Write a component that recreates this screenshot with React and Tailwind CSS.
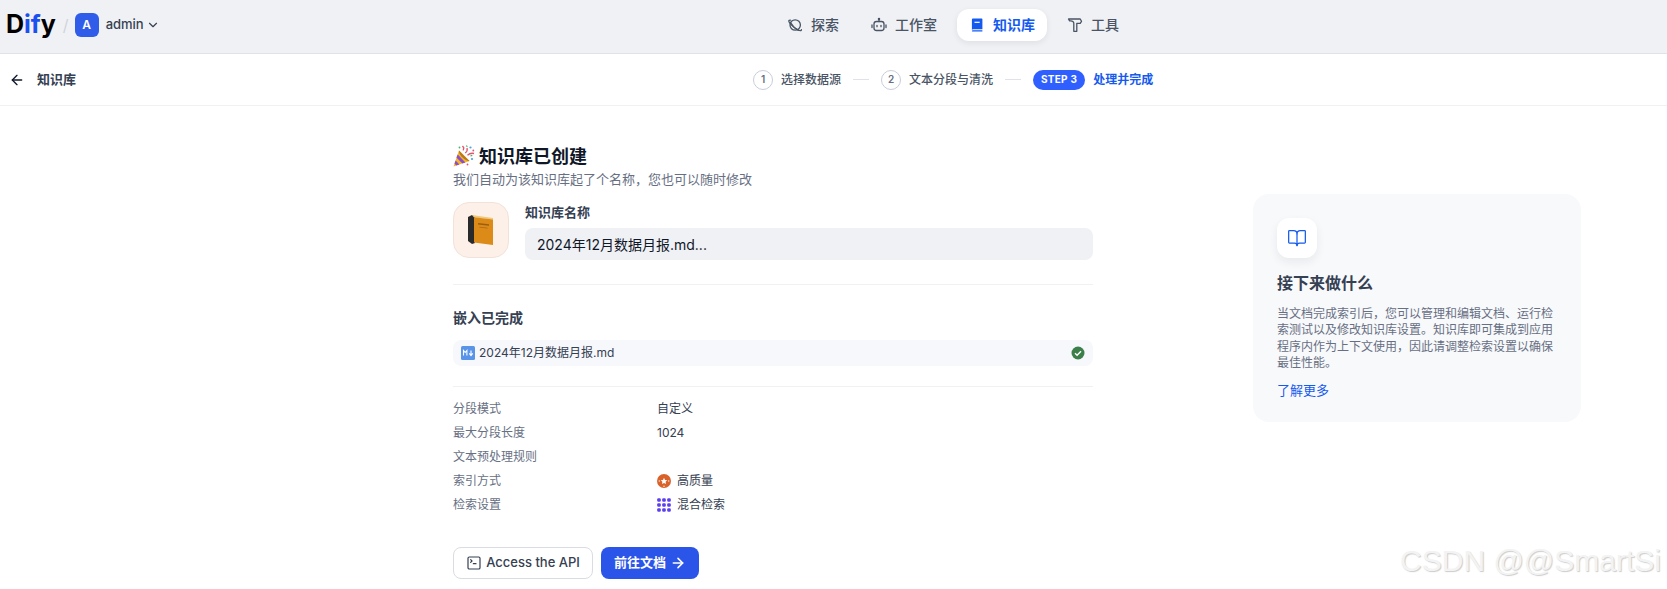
import { ArrowLeft, ArrowRight, ChevronDown, BookOpen, SquareTerminal } from "lucide-react";

const font = { fontFamily: "Inter, 'Noto Sans CJK SC', sans-serif" };

const ExploreIcon = () => (
  <svg width="16" height="16" viewBox="0 0 16 16" fill="none" stroke="#495464" strokeWidth="1.3">
    <circle cx="8.2" cy="8" r="5.2" />
    <path d="M3.4 3.2c-1 0-1.6.3-1.6.9 0 .8 1.500 2.800 3.800 5 2.500 2.300 5.400 4.300 7.600 4.500.8.100 1.300-.3 1.200-1" strokeLinecap="round" />
    <path d="M3.500 5.500c2 3.600 4.500 6 8 7.800" strokeLinecap="round" />
  </svg>
);

const RobotIcon = () => (
  <svg width="16" height="16" viewBox="0 0 16 16" fill="none" stroke="#495464" strokeWidth="1.3">
    <rect x="3" y="4.500" width="10" height="9" rx="2.500" />
    <path d="M8 4.500V2.500M1 8v2.500M15 8v2.500" strokeLinecap="round" />
    <circle cx="8" cy="2" r=".6" fill="#495464" />
    <path d="M6 8.300v1.400M10 8.300v1.400" strokeLinecap="round" />
  </svg>
);

const BookFilledIcon = () => (
  <svg width="16" height="16" viewBox="0 0 16 16" fill="#155aef">
    <path d="M3.800 1.500h8.900c.4 0 .7.300.7.700v10.100H4.200c-.6 0-1 .2-1.300.5V2.400c0-.5.400-.9.900-.9z" />
    <path d="M4.200 13.200h9.200v1.300H4.200c-.8 0-1.300-.2-1.300-.6s.5-.7 1.300-.7z" />
    <path d="M5.500 4.700h5.200v1.200H5.500z" fill="#fff" />
  </svg>
);

const HammerIcon = () => (
  <svg width="16" height="16" viewBox="0 0 16 16" fill="none" stroke="#495464" strokeWidth="1.3" strokeLinejoin="round">
    <path d="M1.500 2h11.700l1.300 2.300-1.300 2H9.800v8H6.800v-8c0-1.700-1.400-2.400-3-2.400H2.600z" />
  </svg>
);

const PartyIcon = () => (
  <svg width="22" height="22" viewBox="0 0 22 22">
    <path d="M0.500 21.500L6 5.500l10.500 10.500z" fill="#f5b62c" />
    <path d="M2.600 15.500l3.800 3.900-3 1.100-1.900-1.900zM4.700 9.500l7.700 7.900-3 1.100-6-6.100z" fill="#8a4ec7" />
    <path d="M6 5.500l10.500 10.500c-1.200.7-4.700-1.100-7-3.400S5.300 6.700 6 5.500z" fill="#b97a1e" />
    <path d="M9.500 1l1.300 1.800-.6 2.500M14 3c.6 2 0 3.700-1.800 5M21 8.500c-2.400-.6-4.700 0-6.500 1.800" stroke="#e2546b" strokeWidth="1.300" fill="none" />
    <path d="M13 .8l1.500.7M17.500 10.800l1.800-.4" stroke="#45b36b" strokeWidth="1.200" />
    <circle cx="17.500" cy="2.500" r="1.100" fill="#4aa3e0" />
    <circle cx="20.300" cy="5.500" r=".9" fill="#e2546b" />
    <circle cx="19" cy="14" r="1.100" fill="#4aa3e0" />
    <circle cx="6.500" cy="2.500" r=".9" fill="#45b36b" />
    <circle cx="14.500" cy="19.500" r=".9" fill="#e2546b" />
  </svg>
);

const OrangeBook = () => (
  <svg width="28" height="32" viewBox="0 0 28 32">
    <path d="M1 3l4-2 3 1.500V29l-3 1-4-3z" fill="#2b2a2a" />
    <path d="M5 1l21 3v1.500L7 3.500z" fill="#f0c97a" />
    <path d="M7 3.200l19 2.300V31L7 28.500z" fill="#dc8a18" />
    <path d="M11 9l11 1.300v1.500L11 10.500z" fill="#8a5310" opacity=".8" />
    <path d="M12.500 12.800l8 1v.8l-8-1z" fill="#8a5310" opacity=".6" />
  </svg>
);

const MdIcon = () => (
  <svg width="14" height="14" viewBox="0 0 14 14">
    <rect width="14" height="14" rx="1.500" fill="#5a94e8" />
    <path d="M2.500 9.500v-5l1.700 2 1.700-2v5" stroke="#fff" strokeWidth="1.100" fill="none" />
    <path d="M10 4.500v4M8.300 7.300L10 9.500l1.700-2.200" stroke="#fff" strokeWidth="1.100" fill="none" />
  </svg>
);

const CheckIcon = () => (
  <svg width="14" height="14" viewBox="0 0 14 14">
    <circle cx="7" cy="7" r="6.500" fill="#3b8049" />
    <path d="M4 7.200l2.100 2.100L10 5.200" stroke="#fff" strokeWidth="1.400" fill="none" />
  </svg>
);

const QualityIcon = () => (
  <svg width="14" height="14" viewBox="0 0 14 14">
    <circle cx="7" cy="7" r="7" fill="#d9622b" />
    <path d="M7 3.800l1 2.100 2.300.3-1.700 1.600.4 2.300L7 9l-2 1.100.4-2.300-1.700-1.600L6 5.900z" fill="#fff" />
    <circle cx="2.300" cy="7" r=".8" fill="#fbd9c4" />
    <circle cx="11.700" cy="7" r=".8" fill="#fbd9c4" />
    <circle cx="7" cy="12.200" r=".8" fill="#fbd9c4" />
  </svg>
);

const HybridIcon = () => (
  <svg width="14" height="14" viewBox="0 0 14 14" fill="#5a3ff0">
    {[0.2, 5.2, 10.2].map((y) =>
      [0.2, 5.2, 10.2].map((x) => <rect key={`${x}-${y}`} x={x} y={y} width="3.600" height="3.600" rx="1.200" />)
    )}
  </svg>
);

const NavItem = ({ icon, label, active }) => (
  <div
    className={`flex h-8 items-center gap-2 rounded-xl px-3 text-[14px] font-medium ${
      active ? "bg-white text-[#155aef] font-semibold shadow-[0_2px_6px_rgba(16,24,40,0.08)]" : "text-[#495464]"
    }`}
  >
    {icon}
    <span>{label}</span>
  </div>
);

const Step = ({ n, label }) => (
  <div className="flex items-center gap-2">
    <div className="flex h-5 w-5 items-center justify-center rounded-full border border-[#c8ceda] text-[10px] font-semibold text-[#676f83]">
      {n}
    </div>
    <span className="text-[12px] font-medium text-[#495464]">{label}</span>
  </div>
);

const InfoRow = ({ label, icon, value }) => (
  <div className="flex h-6 items-center text-[12px]">
    <span className="w-[204px] text-[#676f83]">{label}</span>
    <div className="flex items-center gap-1.5 text-[#354052]">
      {icon}
      <span>{value}</span>
    </div>
  </div>
);

export default function App() {
  return (
    <div className="relative h-[589px] w-full overflow-hidden bg-white" style={font}>
      <header className="flex h-[54px] items-center justify-between border-b border-[#e0e2e8] bg-[#f0f1f5] pb-1 pl-1.5">
        <div className="flex w-[760px] items-center">
          <span className="text-[25px] font-bold leading-none text-black">
            D<span className="text-[#1c4ff0]">if</span>y
          </span>
          <span className="ml-[7px] mr-[6px] text-[16px] text-[#d0d4dc]">/</span>
          <div className="flex h-6 w-6 items-center justify-center rounded-md bg-[#2f5ce8] text-[12px] font-semibold text-white">
            A
          </div>
          <span className="ml-[7px] text-[13px] font-medium text-[#354052]">admin</span>
          <ChevronDown size={14} className="ml-0.5 text-[#354052]" />
        </div>
        <nav className="mr-[536px] flex items-center gap-2">
          <NavItem icon={<ExploreIcon />} label="探索" />
          <NavItem icon={<RobotIcon />} label="工作室" />
          <NavItem icon={<BookFilledIcon />} label="知识库" active />
          <NavItem icon={<HammerIcon />} label="工具" />
        </nav>
      </header>

      <div className="flex h-[52px] items-center border-b border-[#f0f1f3] pl-[9px]">
        <ArrowLeft size={16} strokeWidth={2} className="text-[#101828]" />
        <span className="ml-3 w-[716px] text-[13px] font-semibold text-[#354052]">知识库</span>
        <div className="flex items-center gap-3">
          <Step n="1" label="选择数据源" />
          <div className="h-px w-4 bg-[#dfe2e8]" />
          <Step n="2" label="文本分段与清洗" />
          <div className="h-px w-4 bg-[#dfe2e8]" />
          <div className="flex items-center gap-2">
            <div className="flex h-5 items-center rounded-full bg-[#2f5fff] px-2 text-[10px] font-bold tracking-wide text-white">
              STEP 3
            </div>
            <span className="text-[12px] font-semibold text-[#155aef]">处理并完成</span>
          </div>
        </div>
      </div>

      <main className="flex pl-[453px]">
        <div className="w-[640px] pt-[38px]">
          <div className="flex h-6 items-center gap-[4px] text-[18px] font-semibold text-[#101828]">
            <PartyIcon />
            <span>知识库已创建</span>
          </div>
          <p className="mt-px text-[13px] leading-5 text-[#676f83]">我们自动为该知识库起了个名称，您也可以随时修改</p>

          <div className="mt-[13px] flex gap-4">
            <div className="flex h-14 w-14 items-center justify-center rounded-2xl border border-[#f3e2d9] bg-[#fdf0e8]">
              <OrangeBook />
            </div>
            <div className="flex-1">
              <div className="text-[13px] font-semibold leading-5 text-[#354052]">知识库名称</div>
              <div className="mt-1.5 flex h-8 items-center rounded-lg bg-[#f0f1f5] px-3 text-[14px] text-[#101828]">
                2024年12月数据月报.md...
              </div>
            </div>
          </div>

          <div className="mt-6 h-px bg-[#f0f1f3]" />

          <div className="mt-[23px] text-[14px] font-semibold leading-5 text-[#354052]">嵌入已完成</div>
          <div className="mt-3 flex h-[26px] items-center justify-between rounded-lg bg-[#f7f8fc] px-2">
            <div className="flex items-center gap-1 text-[12px] text-[#354052]">
              <MdIcon />
              <span>2024年12月数据月报.md</span>
            </div>
            <CheckIcon />
          </div>

          <div className="mt-5 h-px bg-[#f0f1f3]" />

          <div className="mt-2.5">
            <InfoRow label="分段模式" value="自定义" />
            <InfoRow label="最大分段长度" value="1024" />
            <InfoRow label="文本预处理规则" />
            <InfoRow label="索引方式" icon={<QualityIcon />} value="高质量" />
            <InfoRow label="检索设置" icon={<HybridIcon />} value="混合检索" />
          </div>

          <div className="mt-[30px] flex gap-2">
            <button className="flex h-8 w-[140px] items-center justify-center gap-1 rounded-lg border border-[#d9dce3] bg-white text-[13px] font-medium text-[#354052]">
              <SquareTerminal size={16} strokeWidth={1.800} />
              Access the API
            </button>
            <button className="flex h-8 w-[98px] items-center justify-center gap-1 rounded-lg bg-[#2b55e8] text-[13px] font-semibold text-white">
              前往文档
              <ArrowRight size={16} strokeWidth={2.400} />
            </button>
          </div>
        </div>

        <aside className="ml-[160px] mt-[88px] h-[228px] w-[328px] rounded-2xl bg-[#f8f9fb] px-6 pt-6">
          <div className="flex h-10 w-10 items-center justify-center rounded-xl bg-white shadow-[0_4px_10px_rgba(16,24,40,0.07)]">
            <BookOpen size={20} strokeWidth={1.500} className="text-[#155aef]" />
          </div>
          <h3 className="mt-[13px] text-[16px] font-semibold leading-6 text-[#354052]">接下来做什么</h3>
          <p className="mt-[11px] text-[12px] leading-[16.3px] text-[#676f83]">
            当文档完成索引后，您可以管理和编辑文档、运行检索测试以及修改知识库设置。知识库即可集成到应用程序内作为上下文使用，因此请调整检索设置以确保最佳性能。
          </p>
          <div className="mt-[9px] text-[13px] leading-5 text-[#155aef]">了解更多</div>
        </aside>
      </main>

      <div className="absolute bottom-[10px] right-[6px] text-[30px] font-normal leading-9 text-[#f3f3f3] [font-family:'Liberation_Sans',sans-serif] [text-shadow:1px_1px_1px_rgba(110,110,110,0.35)]">
        CSDN @@SmartSi
      </div>
    </div>
  );
}
